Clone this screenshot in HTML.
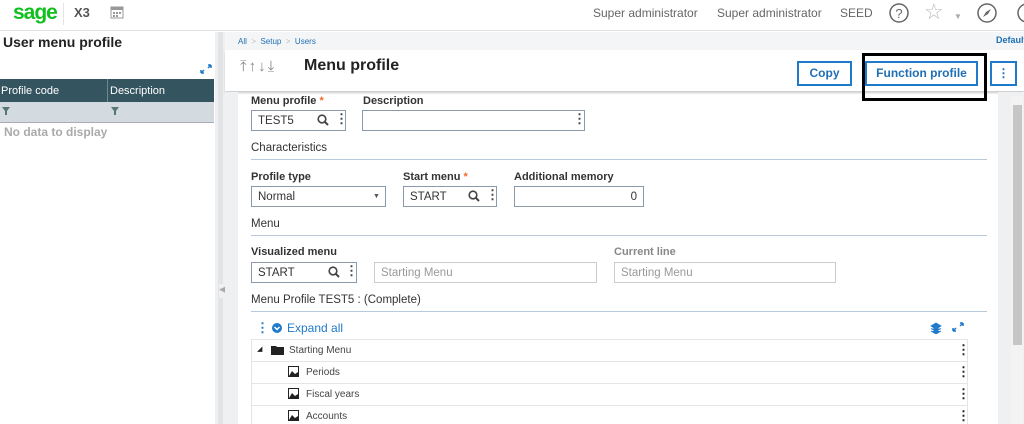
<!DOCTYPE html>
<html><head><style>
*{box-sizing:border-box;margin:0;padding:0}
body{width:1024px;height:424px;overflow:hidden;background:#fff;font-family:"Liberation Sans",sans-serif;position:relative;color:#222}
.a{position:absolute}
.lbl{font-size:11px;font-weight:bold;color:#333}
.inp{border:1px solid #8a9aa8;height:21px;background:#fff;font-size:11.5px;padding:4px 6px;color:#333}
.ro{border:1px solid #c8cdd2;color:#999}
.sec{font-size:11.5px;color:#333}
.line{height:1px;background:#b8cbdc}
.btn{border:2px solid #1f7ac9;color:#1f6fb5;font-weight:bold;font-size:12px;text-align:center;line-height:20px;background:#fff}
.row{border-bottom:1px solid #e3e6e9;height:22px;font-size:10px;color:#444}
</style></head><body>
<svg width="0" height="0" style="position:absolute"><defs><symbol id="mg" viewBox="0 0 12 12"><circle cx="5" cy="5" r="3.8" fill="none" stroke="#444" stroke-width="1.6"/><path d="M7.8 7.8 L11 11" stroke="#444" stroke-width="2"/></symbol></defs></svg>
<!-- top bar -->
<div class="a" style="left:0;top:0;width:1024px;height:31px;border-bottom:1px solid #dde2e6"></div>
<div class="a" style="left:13px;top:1px;font-size:21px;font-weight:bold;color:#11c01f;letter-spacing:-1px">sage</div>
<div class="a" style="left:63px;top:3px;width:1px;height:22px;background:#e5e5e5"></div>
<div class="a" style="left:74px;top:5px;font-size:13px;font-weight:bold;color:#555">X3</div>
<svg class="a" style="left:110px;top:5px" width="14" height="14"><rect x="1" y="2" width="12" height="11" fill="none" stroke="#999"/><rect x="1" y="2" width="12" height="3" fill="#999"/><g fill="#999"><rect x="3" y="7" width="2" height="2"/><rect x="6" y="7" width="2" height="2"/><rect x="9" y="7" width="2" height="2"/><rect x="3" y="10" width="2" height="2"/><rect x="6" y="10" width="2" height="2"/></g></svg>
<div class="a" style="left:593px;top:6px;font-size:12px;color:#666">Super administrator</div>
<div class="a" style="left:717px;top:6px;font-size:12px;color:#666">Super administrator</div>
<div class="a" style="left:840px;top:6px;font-size:12px;color:#666">SEED</div>
<svg class="a" style="left:888px;top:2px" width="22" height="22"><circle cx="11" cy="11" r="9" fill="none" stroke="#666" stroke-width="1.5"/><text x="11" y="16" font-size="13" text-anchor="middle" fill="#666" font-family="Liberation Sans">?</text></svg>
<div class="a" style="left:924px;top:-1px;font-size:22px;color:#bbb">☆</div>
<div class="a" style="left:954px;top:12px;font-size:8px;color:#aaa">▼</div>
<svg class="a" style="left:976px;top:2px" width="22" height="22"><circle cx="11" cy="11" r="9" fill="none" stroke="#666" stroke-width="1.5"/><path d="M15 7 L12 12 L7 15 L10 10 Z" fill="#666"/></svg>
<svg class="a" style="left:1016px;top:2px" width="10" height="22"><circle cx="11" cy="11" r="9" fill="none" stroke="#666" stroke-width="1.5"/></svg>

<!-- left panel -->
<div class="a" style="left:3px;top:34px;font-size:14px;font-weight:bold;color:#222">User menu profile</div>
<svg class="a" style="left:200px;top:64px" width="12" height="10"><path d="M1 9 L4 6 M1 9 L1 6 M1 9 L4 9 M11 1 L8 4 M11 1 L8 1 M11 1 L11 4" stroke="#1f7ac9" stroke-width="1.5" fill="none"/></svg>
<div class="a" style="left:0;top:79px;width:214px;height:23px;background:#34545f"></div>
<div class="a" style="left:107px;top:79px;width:1px;height:44px;background:#6e8791"></div>
<div class="a" style="left:1px;top:85px;font-size:11px;color:#fff">Profile code</div>
<div class="a" style="left:110px;top:85px;font-size:11px;color:#fff">Description</div>
<div class="a" style="left:0;top:102px;width:214px;height:21px;background:#d4dbe0;border-bottom:1px solid #aab"></div>
<svg class="a" style="left:2px;top:107px" width="8" height="8"><path d="M0 0 H8 L5 4 V8 H3 V4Z" fill="#577"/></svg>
<svg class="a" style="left:111px;top:107px" width="8" height="8"><path d="M0 0 H8 L5 4 V8 H3 V4Z" fill="#577"/></svg>
<div class="a" style="left:4px;top:125px;font-size:12px;font-weight:bold;color:#aaa">No data to display</div>

<!-- splitter -->
<div class="a" style="left:215px;top:32px;width:10px;height:392px;background:#eef0f1"></div>
<div class="a" style="left:218px;top:32px;width:5px;height:392px;background-image:radial-gradient(#bbb 0.6px,transparent 0.7px);background-size:2px 2px"></div>
<div class="a" style="left:219px;top:284px;font-size:9px;color:#aaa;background:#eef0f1;height:14px">◀</div>

<!-- breadcrumb -->
<div class="a" style="left:225px;top:32px;width:799px;height:18px;background:#f3f5f6"></div>
<div class="a" style="left:238px;top:37px;font-size:8px;color:#1f6fb5">All &nbsp;<span style="color:#bbb">&gt;</span>&nbsp; Setup &nbsp;<span style="color:#bbb">&gt;</span>&nbsp; Users</div>
<div class="a" style="left:996px;top:35px;font-size:9px;font-weight:bold;color:#1f6fb5">Default</div>
<!-- header -->
<div class="a" style="left:225px;top:50px;width:799px;height:41px;background:#fff;box-shadow:0 2px 2px #ccc"></div>
<div class="a" style="left:240px;top:58px;font-size:15px;color:#888;letter-spacing:2px">⤒↑↓⤓</div>
<div class="a" style="left:304px;top:57px;font-size:16px;font-weight:bold;color:#222">Menu profile</div>
<div class="a btn" style="left:797px;top:61px;width:55px;height:25px">Copy</div>
<div class="a btn" style="left:865px;top:61px;width:113px;height:25px">Function profile</div>
<div class="a" style="left:862px;top:53px;width:125px;height:48px;border:3px solid #000"></div>
<div class="a btn" style="left:990px;top:61px;width:27px;height:25px">⋮</div>

<!-- content bg -->
<div class="a" style="left:225px;top:92px;width:13px;height:332px;background:#eef0f1"></div>
<div class="a" style="left:998px;top:92px;width:26px;height:332px;background:#eef0f1"></div>
<div class="a" style="left:1011px;top:96px;width:12px;height:328px;background:#f3f3f3"></div>
<div class="a" style="left:1013px;top:105px;width:9px;height:240px;background:#c6c6c6"></div>

<div class="a lbl" style="left:251px;top:95px">Menu profile <span style="color:#f06a2a">*</span></div>
<div class="a inp" style="left:251px;top:110px;width:95px">TEST5</div>
<svg class="a" style="left:317px;top:114px" width="12" height="12"><use href="#mg"/></svg>
<div class="a" style="left:335px;top:111px;font-size:13px;color:#444;font-weight:bold">⋮</div>
<div class="a lbl" style="left:363px;top:95px">Description</div>
<div class="a inp" style="left:362px;top:110px;width:223px"></div>
<div class="a" style="left:573px;top:111px;font-size:13px;color:#444;font-weight:bold">⋮</div>

<div class="a sec" style="left:251px;top:142px">Characteristics</div>
<div class="a line" style="left:251px;top:159px;width:736px"></div>
<div class="a lbl" style="left:251px;top:171px">Profile type</div>
<div class="a inp" style="left:251px;top:186px;width:135px">Normal</div>
<div class="a" style="left:373px;top:193px;font-size:7px;color:#555">▼</div>
<div class="a lbl" style="left:403px;top:171px">Start menu <span style="color:#f06a2a">*</span></div>
<div class="a inp" style="left:403px;top:186px;width:94px">START</div>
<svg class="a" style="left:468px;top:190px" width="12" height="12"><use href="#mg"/></svg>
<div class="a" style="left:486px;top:187px;font-size:13px;color:#444;font-weight:bold">⋮</div>
<div class="a lbl" style="left:514px;top:171px">Additional memory</div>
<div class="a inp" style="left:514px;top:186px;width:130px;text-align:right">0</div>

<div class="a sec" style="left:251px;top:218px">Menu</div>
<div class="a line" style="left:251px;top:235px;width:736px"></div>
<div class="a lbl" style="left:251px;top:246px">Visualized menu</div>
<div class="a inp" style="left:251px;top:262px;width:106px">START</div>
<svg class="a" style="left:328px;top:266px" width="12" height="12"><use href="#mg"/></svg>
<div class="a" style="left:345px;top:263px;font-size:13px;color:#444;font-weight:bold">⋮</div>
<div class="a inp ro" style="left:374px;top:262px;width:223px">Starting Menu</div>
<div class="a lbl" style="left:614px;top:246px;color:#888">Current line</div>
<div class="a inp ro" style="left:614px;top:262px;width:222px">Starting Menu</div>

<div class="a sec" style="left:251px;top:294px">Menu Profile TEST5 : (Complete)</div>
<div class="a line" style="left:251px;top:311px;width:736px"></div>
<div class="a" style="left:256px;top:320px;font-size:13px;color:#1f7ac9;font-weight:bold">⋮</div>
<svg class="a" style="left:272px;top:323px" width="10" height="10"><circle cx="5" cy="5" r="5" fill="#1f7ac9"/><path d="M2.5 4 L5 6.5 L7.5 4" stroke="#fff" stroke-width="1.5" fill="none"/></svg>
<div class="a" style="left:287px;top:321px;font-size:12px;color:#1f7ac9">Expand all</div>
<svg class="a" style="left:930px;top:322px" width="12" height="12"><path d="M6 1 L11 4 L6 7 L1 4Z M1 6.5 L6 9.5 L11 6.5 M1 9 L6 12 L11 9" fill="#1f7ac9" stroke="#1f7ac9" stroke-width="0.8"/></svg>
<svg class="a" style="left:952px;top:322px" width="12" height="10"><path d="M1 9 L4 6 M1 9 L1 6 M1 9 L4 9 M11 1 L8 4 M11 1 L8 1 M11 1 L11 4" stroke="#1f7ac9" stroke-width="1.5" fill="none"/></svg>

<div class="a" style="left:251px;top:339px;width:717px;height:85px;border-left:1px solid #e3e6e9;border-right:1px solid #e3e6e9;border-top:1px solid #e3e6e9"></div>
<div class="a row" style="left:251px;top:340px;width:717px"></div>
<div class="a row" style="left:251px;top:362px;width:717px"></div>
<div class="a row" style="left:251px;top:384px;width:717px"></div>
<div class="a" style="left:257px;top:345px;font-size:7px;color:#222">◢</div>
<svg class="a" style="left:271px;top:345px" width="13" height="10"><path d="M0 1 H5 L6 2 H13 V10 H0Z" fill="#222"/></svg>
<div class="a" style="left:289px;top:345px;font-size:10px;color:#444">Starting Menu</div>
<svg class="a" style="left:288px;top:366px" width="11" height="11"><rect width="11" height="11" fill="#222"/><rect x="1" y="1" width="9" height="9" fill="#fff"/><path d="M1 10 L4 5 L7 8 L10 6 V10Z" fill="#222"/></svg>
<div class="a" style="left:306px;top:367px;font-size:10px;color:#444">Periods</div>
<svg class="a" style="left:288px;top:388px" width="11" height="11"><rect width="11" height="11" fill="#222"/><rect x="1" y="1" width="9" height="9" fill="#fff"/><path d="M1 10 L4 5 L7 8 L10 6 V10Z" fill="#222"/></svg>
<div class="a" style="left:306px;top:389px;font-size:10px;color:#444">Fiscal years</div>
<svg class="a" style="left:288px;top:410px" width="11" height="11"><rect width="11" height="11" fill="#222"/><rect x="1" y="1" width="9" height="9" fill="#fff"/><path d="M1 10 L4 5 L7 8 L10 6 V10Z" fill="#222"/></svg>
<div class="a" style="left:306px;top:411px;font-size:10px;color:#444">Accounts</div>
<div class="a" style="left:957px;top:342px;font-size:13px;font-weight:bold;color:#222">⋮</div>
<div class="a" style="left:957px;top:364px;font-size:13px;font-weight:bold;color:#222">⋮</div>
<div class="a" style="left:957px;top:386px;font-size:13px;font-weight:bold;color:#222">⋮</div>
<div class="a" style="left:957px;top:408px;font-size:13px;font-weight:bold;color:#222">⋮</div>
</body></html>
